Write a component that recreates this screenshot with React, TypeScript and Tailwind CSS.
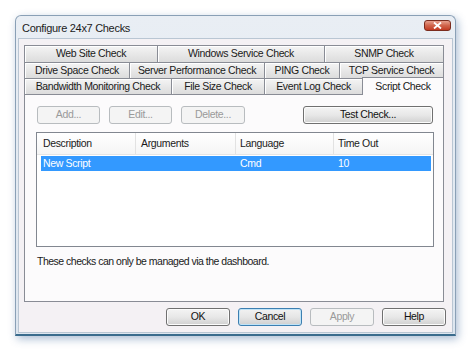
import React from "react";

const font = { fontFamily: '"Liberation Sans", Arial, sans-serif' };

const tabRows: { label: string; w: string }[][] = [
  [
    { label: "Web Site Check", w: "w-[134px]" },
    { label: "Windows Service Check", w: "w-[168px]" },
    { label: "SNMP Check", w: "flex-1" },
  ],
  [
    { label: "Drive Space Check", w: "w-[106px]" },
    { label: "Server Performance Check", w: "w-[136px]" },
    { label: "PING Check", w: "w-[76px]" },
    { label: "TCP Service Check", w: "flex-1" },
  ],
];

const txt = "text-[10.5px] tracking-[-0.35px]";

const Tab = ({ label, w, first }: { label: string; w: string; first?: boolean }) => (
  <div
    className={`${w} ${first ? "" : "-ml-px"} h-full flex items-center justify-center border border-b-0 border-[#898c95] bg-gradient-to-b from-[#f4f4f4] to-[#dcdcdc] ${txt} text-[#1a1a1a] shadow-[inset_1px_1px_0_#fff]`}
  >
    {label}
  </div>
);

const Button = ({
  label,
  w,
  disabled,
  focused,
}: {
  label: string;
  w: string;
  disabled?: boolean;
  focused?: boolean;
}) => (
  <div
    className={`${w} h-[18px] flex items-center justify-center rounded-[3px] border ${txt} ${
      disabled
        ? "border-[#b8bcbf] bg-[#f4f4f4] text-[#9a9a9a]"
        : focused
        ? "border-[#3c7fb1] bg-gradient-to-b from-[#f2f2f2] via-[#e6e6e6] to-[#cfcfcf] text-[#111] shadow-[inset_0_0_0_1px_#bfe3f7]"
        : "border-[#707070] bg-gradient-to-b from-[#f4f4f4] via-[#e8e8e8] to-[#d0d0d0] text-[#111] shadow-[inset_0_0_0_1px_#fcfcfc]"
    }`}
  >
    {label}
  </div>
);

export default function App() {
  return (
    <div className="w-[474px] h-[353px] bg-white pl-[15px] pt-[15px]" style={font}>
      <div className="w-[441px] h-[321px] flex flex-col rounded-t-[6px] border border-[#8aa0b6] border-b-[2px] border-b-[#3a6c8d] bg-gradient-to-b from-[#e9eef4] to-[#dde6ef] shadow-[2px_3px_8px_rgba(70,110,160,0.45)]">
        {/* title bar */}
        <div className="h-[22px] flex items-center justify-between pl-[6px] pr-[4px]">
          <span className="text-[11px] text-[#1b1b1b] tracking-[-0.3px] pt-[3px]">Configure 24x7 Checks</span>
          <div className="w-[27px] h-[11px] mt-[-3px] rounded-[3px] border border-[#7b2c1e] bg-gradient-to-b from-[#e7a08e] via-[#d0644b] to-[#c23a22] flex items-center justify-center">
            <svg width="9" height="7" viewBox="0 0 9 7">
              <path d="M1 0.5 L8 6.5 M8 0.5 L1 6.5" stroke="#fff" strokeWidth="1.8" />
            </svg>
          </div>
        </div>

        {/* client area */}
        <div className="flex-1 mx-[2px] mb-[1px] bg-[#f4f1f4] border border-[#b9c6d3] pl-[5px] pt-[6px]">
          <div className="w-[420px]">
            {tabRows.map((row, i) => (
              <div key={i} className={`flex ${i === 0 ? "h-[17px]" : "h-[16px]"}`}>
                {row.map((t, j) => (
                  <Tab key={t.label} label={t.label} w={t.w} first={j === 0} />
                ))}
              </div>
            ))}
            <div className="flex items-end h-[16px]">
              <Tab label="Bandwidth Monitoring Check" w="w-[148px]" first />
              <Tab label="File Size Check" w="w-[94px]" />
              <Tab label="Event Log Check" w="w-[99px]" />
              <div className={`flex-1 -ml-px h-[18px] -mb-px relative z-10 flex items-start justify-center pt-[1px] border border-b-0 border-[#898c95] bg-[#fcfbfc] ${txt} text-[#1a1a1a]`}>
                Script Check
              </div>
            </div>

            {/* tab page */}
            <div className="h-[208px] border border-[#898c95] bg-[#fcfbfc] pt-[11px] pl-[12px] pr-[10px]">
              <div className="flex items-center">
                <Button label="Add..." w="w-[63px]" disabled />
                <div className="w-[9px]" />
                <Button label="Edit..." w="w-[63px]" disabled />
                <div className="w-[9px]" />
                <Button label="Delete..." w="w-[64px]" disabled />
                <div className="flex-1" />
                <Button label="Test Check..." w="w-[130px]" />
              </div>

              <div className="mt-[8px] -ml-px w-[398px] h-[115px] border border-[#828790] bg-white">
                <div className={`h-[22px] flex ${txt} text-[#1a1a1a] bg-gradient-to-b from-white to-[#f5f5f5] border-b border-[#e5e5e5]`}>
                  <div className="w-[99px] pl-[6px] flex items-center border-r border-[#e2e2e2]">Description</div>
                  <div className="w-[100px] pl-[5px] flex items-center border-r border-[#e2e2e2]">Arguments</div>
                  <div className="w-[98px] pl-[4px] flex items-center border-r border-[#e2e2e2]">Language</div>
                  <div className="flex-1 pl-[4px] flex items-center">Time Out</div>
                </div>
                <div className={`mt-[1px] ml-[4px] mr-[2px] h-[15px] flex items-center ${txt} text-white bg-[#3399ff]`}>
                  <div className="w-[95px] pl-[2px]">New Script</div>
                  <div className="w-[100px]" />
                  <div className="w-[98px] pl-[4px]">Cmd</div>
                  <div className="flex-1 pl-[4px]">10</div>
                </div>
              </div>

              <div className={`mt-[7px] text-[10.5px] tracking-[-0.5px] text-[#1a1a1a]`}>
                These checks can only be managed via the dashboard.
              </div>
            </div>
          </div>

          {/* dialog buttons */}
          <div className="w-[422px] mt-[6px] flex justify-end gap-[8px]">
            <Button label="OK" w="w-[64px]" />
            <Button label="Cancel" w="w-[64px]" focused />
            <Button label="Apply" w="w-[64px]" disabled />
            <Button label="Help" w="w-[64px]" />
          </div>
        </div>
      </div>
    </div>
  );
}
